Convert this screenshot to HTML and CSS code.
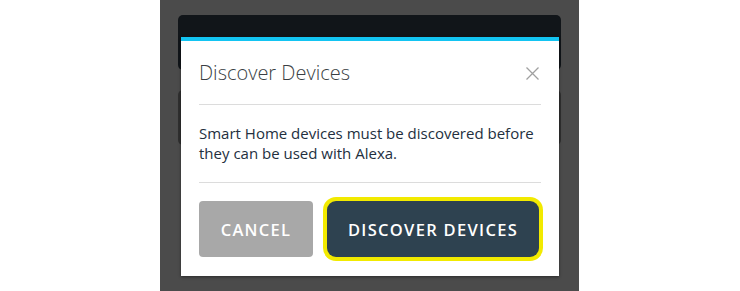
FILE: index.html
```html
<!DOCTYPE html>
<html>
<head>
<meta charset="utf-8">
<link rel="stylesheet" href="styles.css">
</head>
<body>
<div class="screen">
  <div class="bg-card bg-card-dark"><span class="bg-label">DISCOVER DEVICES</span></div>
  <div class="bg-card bg-card-grey"></div>
  <div class="modal">
    <div class="modal-header">
      <h1 class="modal-title">Discover Devices</h1>
      <svg class="close" width="13" height="13" viewBox="0 0 13 13"><path d="M0.5 0.5 L12.5 12.5 M12.5 0.5 L0.5 12.5" stroke="#a0a0a0" stroke-width="1.3" fill="none"/></svg>
    </div>
    <div class="modal-body">Smart Home devices must be discovered before they can be used with Alexa.</div>
    <div class="modal-footer">
      <button class="btn btn-cancel">CANCEL</button>
      <button class="btn btn-primary">DISCOVER DEVICES</button>
    </div>
  </div>
</div>
</body>
</html>
```
FILE: styles.css
```css
html, body {
  margin: 0;
  padding: 0;
  background: #ffffff;
  height: 291px;
  overflow: hidden;
}
.screen {
  position: relative;
  margin-left: 160px;
  width: 419px;
  height: 291px;
  background: #4b4b4b;
  padding-top: 15px;
  box-sizing: border-box;
  font-family: "Open Sans", "Noto Sans", sans-serif;
}
.bg-card {
  margin: 0 18px;
  height: 55px;
  border-radius: 5px;
}
.bg-card-dark {
  background: #111519;
  padding-top: 17px;
  box-sizing: border-box;
  text-align: center;
}
.bg-label {
  color: #6f757a;
  font-size: 16px;
  line-height: 20px;
  font-weight: 600;
  letter-spacing: 1.2px;
}
.bg-card-grey {
  margin-top: 20px;
  background: #303030;
}
.modal {
  position: absolute;
  left: 21px;
  top: 37px;
  width: 378px;
  height: 239px;
  background: #ffffff;
  border-top: 4px solid #13c4f2;
  box-sizing: border-box;
  padding: 0 18px;
  box-shadow: 0 1px 3px rgba(0, 0, 0, 0.45);
  display: flex;
  flex-direction: column;
}
.modal-header {
  height: 63px;
  display: flex;
  align-items: center;
  justify-content: space-between;
  border-bottom: 1px solid #dcdcdc;
}
.modal-title {
  margin: 0;
  font-size: 20px;
  line-height: 28px;
  font-weight: 300;
  color: #3a3f44;
}
.close {
  margin-right: 2px;
  margin-top: 1px;
}
.modal-body {
  padding: 18px 0 19px;
  font-size: 15px;
  line-height: 20px;
  color: #232f3e;
  border-bottom: 1px solid #dcdcdc;
}
.modal-footer {
  display: flex;
  align-items: center;
  padding-top: 18px;
}
.btn {
  height: 56px;
  border: none;
  border-radius: 4px;
  font-family: "Open Sans", "Noto Sans", sans-serif;
  font-size: 16.5px;
  font-weight: 600;
  letter-spacing: 1.3px;
  color: #ffffff;
  padding: 0;
}
.btn-cancel {
  width: 114px;
  background: #a8a8a8;
}
.btn-primary {
  width: 212px;
  margin-left: 14px;
  background: #2e4250;
  border-radius: 9px;
  box-shadow: 0 0 0 4px #f2ea00;
}
```
